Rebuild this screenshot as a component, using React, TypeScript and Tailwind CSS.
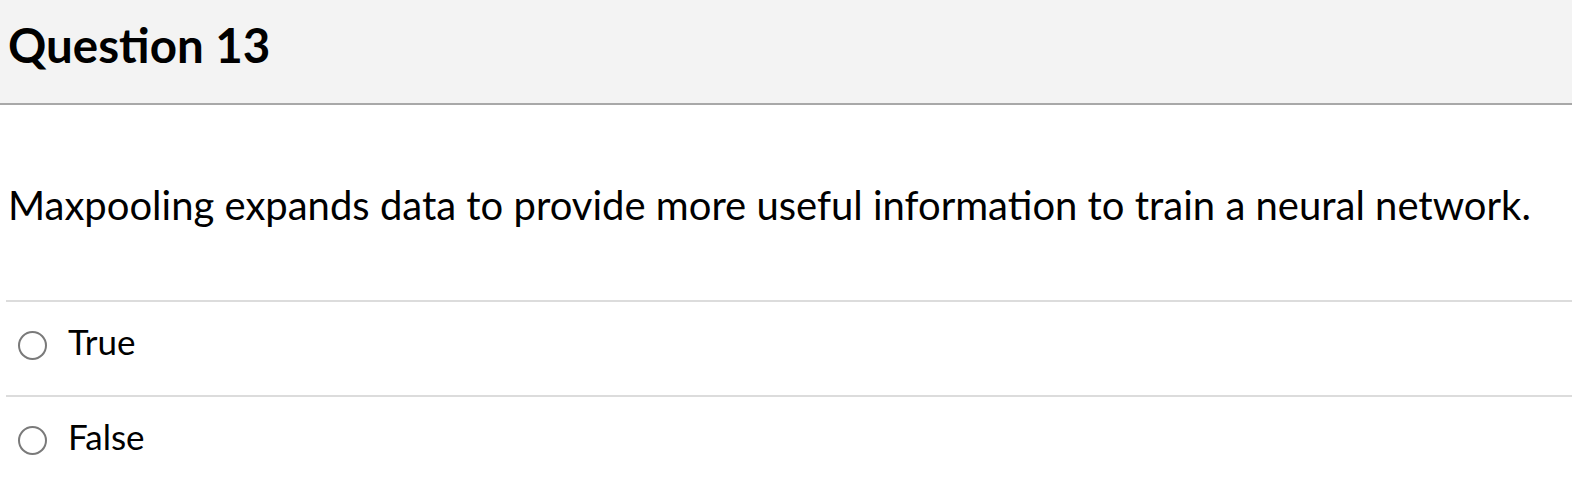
import React from 'react';

const answers = ['True', 'False'];

function Radio() {
  return (
    <span className="mt-[7px] block h-[29px] w-[29px] shrink-0 rounded-full border-2 border-[#7a7a7a] bg-white" />
  );
}

export default function App() {
  return (
    <div className="min-h-[492px] w-full bg-white text-black [font-family:Lato,'Open_Sans',sans-serif]">
      <div className="h-[105px] border-b-2 border-[#a8a8a8] bg-[#f3f3f3] px-2 pt-[21px]">
        <h2 className="text-[47.5px] font-bold leading-none">Question 13</h2>
      </div>

      <div className="px-2 pb-[75px] pt-[80px]">
        <p className="text-[40px] leading-none">
          Maxpooling expands data to provide more useful information to train a neural network.
        </p>
      </div>

      <div className="ml-[6px]">
        {answers.map((a) => (
          <div key={a} className="flex h-[95px] items-start gap-[21px] border-t-2 border-[#dcdcdc] pl-3 pt-[22px]">
            <Radio />
            <span className="text-[35px] leading-none">{a}</span>
          </div>
        ))}
      </div>
    </div>
  );
}
